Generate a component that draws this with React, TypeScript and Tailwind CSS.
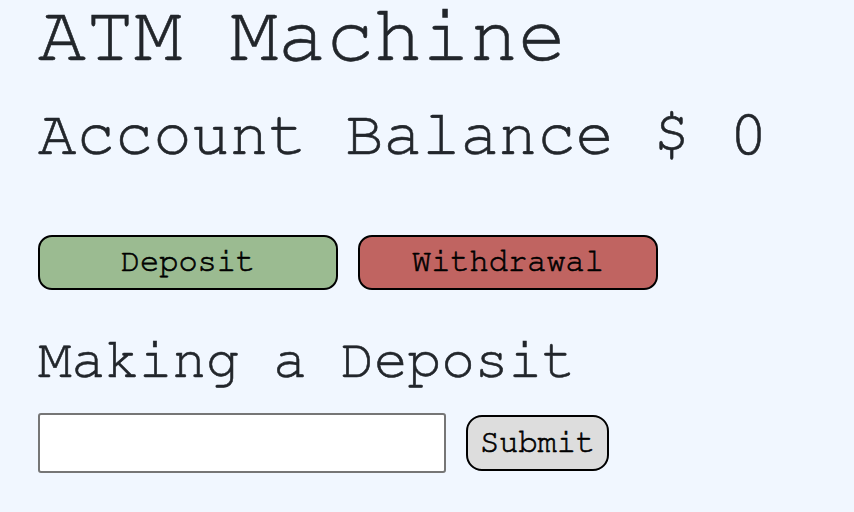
import { useState } from 'react'

export default function App() {
  const [mode, setMode] = useState<'deposit' | 'withdrawal'>('deposit')
  const [amount, setAmount] = useState('')
  const [balance, setBalance] = useState(0)

  const handleSubmit = (e: React.FormEvent) => {
    e.preventDefault()
    const value = Number(amount)
    if (!value) return
    setBalance((b) => (mode === 'deposit' ? b + value : b - value))
    setAmount('')
  }

  return (
    <div className="min-h-screen w-full bg-[#f1f7ff] pl-[38px] text-[#22262b] font-['FreeMono','Courier_New',monospace] [-webkit-text-stroke:0.6px_currentColor]">
      <h1 className="m-0 text-[80px] font-normal leading-[72px]">ATM Machine</h1>
      <h2 className="mt-[23px] text-[64px] font-normal leading-[80px]">Account Balance $ {balance}</h2>

      {/* Mode buttons */}
      <div className="mt-[60px] flex gap-[20px]">
        <button
          onClick={() => setMode('deposit')}
          className="h-[55px] w-[300px] rounded-[14px] border-2 border-black bg-[#9bbb91] pb-[3px] text-[32px] leading-none text-black"
        >
          Deposit
        </button>
        <button
          onClick={() => setMode('withdrawal')}
          className="h-[55px] w-[300px] rounded-[14px] border-2 border-black bg-[#c06461] pb-[3px] text-[32px] leading-none text-black"
        >
          Withdrawal
        </button>
      </div>

      <h3 className="mt-[38px] text-[56px] font-normal leading-[64px]">
        {mode === 'deposit' ? 'Making a Deposit' : 'Making a Withdrawal'}
      </h3>

      <form onSubmit={handleSubmit} className="mt-[21px] flex items-center gap-[20px]">
        <input
          type="number"
          value={amount}
          onChange={(e) => setAmount(e.target.value)}
          className="h-[60px] w-[408px] rounded-[3px] border-2 border-[#767676] bg-white px-2 text-[32px] outline-none"
        />
        <button
          type="submit"
          className="h-[56px] rounded-[16px] border-2 border-black bg-[#dddddd] px-[12px] pb-[3px] text-[32px] leading-none text-black"
        >
          Submit
        </button>
      </form>
    </div>
  )
}
